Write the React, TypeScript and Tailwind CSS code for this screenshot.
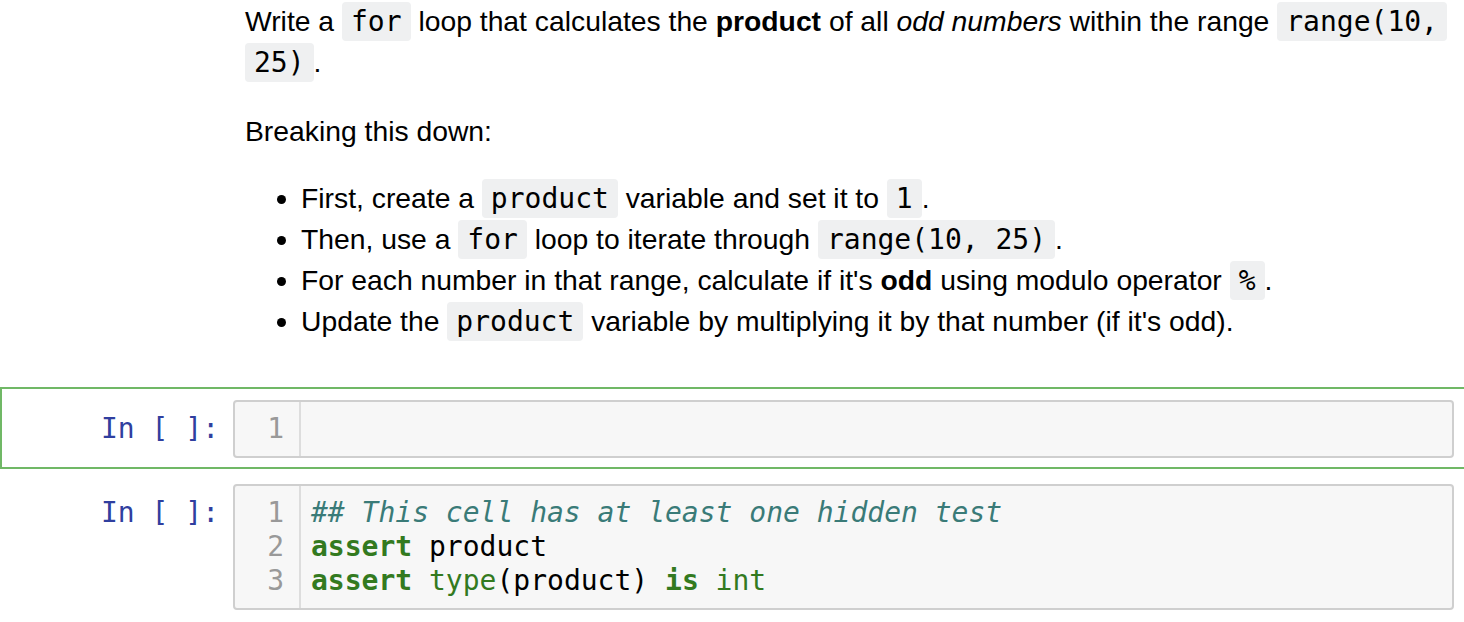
const mono = "font-['DejaVu_Sans_Mono','Liberation_Mono',monospace]";

function C({ children }: { children: React.ReactNode }) {
  return (
    <code className={`${mono} text-[28px] bg-[#eff0f1] rounded-[4px] px-[9px] py-[3px] [box-decoration-break:clone]`}>
      {children}
    </code>
  );
}

function Editor({ lines }: { lines: React.ReactNode[] }) {
  return (
    <div className="flex-1 flex border-2 border-[#cfcfcf] rounded-[4px] bg-[#f7f7f7]">
      <div className={`${mono} text-[28px] leading-[34px] text-[#999999] w-[66px] py-[10px] pr-[15px] text-right border-r-2 border-[#dddddd]`}>
        {lines.map((_, i) => (
          <div key={i}>{i + 1}</div>
        ))}
      </div>
      <div className={`${mono} text-[28px] leading-[34px] text-black py-[10px] pl-[10px] whitespace-pre`}>
        {lines.map((l, i) => (
          <div key={i}>{l === '' ? '\u00a0' : l}</div>
        ))}
      </div>
    </div>
  );
}

function Prompt() {
  return (
    <div className={`${mono} text-[28px] leading-[34px] text-[#303f9f] w-[231px] shrink-0 text-right pr-[14px] pt-[12px] whitespace-pre`}>
      In [ ]:
    </div>
  );
}

export default function App() {
  const kw = 'text-[#337a1f] font-bold';
  const bi = 'text-[#337a1f]';
  return (
    <div className="bg-white min-h-screen overflow-hidden font-['Liberation_Sans',Arial,sans-serif] text-black">
      <div className="pl-[245px] pr-[12px] pt-[1px] text-[28.3px] leading-[41px]">
        <p>
          Write a <C>for</C> loop that calculates the <b>product</b> of all <i>odd numbers</i> within the range{' '}
          <C>range(10, 25)</C>.
        </p>
        <p className="mt-[28px]">Breaking this down:</p>
        <ul className="mt-[26px] list-disc pl-[56px]">
          <li>
            First, create a <C>product</C> variable and set it to <C>1</C>.
          </li>
          <li>
            Then, use a <C>for</C> loop to iterate through <C>range(10, 25)</C>.
          </li>
          <li>
            For each number in that range, calculate if it's <b>odd</b> using modulo operator <C>%</C>.
          </li>
          <li>
            Update the <C>product</C> variable by multiplying it by that number (if it's odd).
          </li>
        </ul>
      </div>

      <div className="mt-[45px] w-[1480px] border-2 border-[#70b866] flex pt-[11px] pb-[9px] pr-[24px]">
        <Prompt />
        <Editor lines={['']} />
      </div>

      <div className="w-[1480px] border-2 border-transparent flex pt-[13px] pb-[10px] pr-[24px]">
        <Prompt />
        <Editor
          lines={[
            <span className="italic text-[#3a7b78]">## This cell has at least one hidden test</span>,
            <span>
              <span className={kw}>assert</span> product
            </span>,
            <span>
              <span className={kw}>assert</span> <span className={bi}>type</span>(product) <span className={kw}>is</span>{' '}
              <span className={bi}>int</span>
            </span>,
          ]}
        />
      </div>
    </div>
  );
}
